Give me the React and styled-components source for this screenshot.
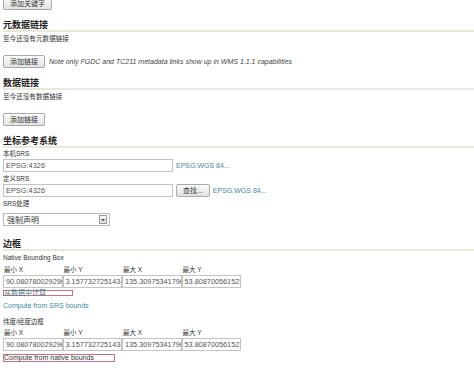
import React from "react";
import styled, { createGlobalStyle } from "styled-components";

const GlobalStyle = createGlobalStyle`
  html, body {
    margin: 0;
    padding: 0;
    background: #fff;
    overflow: hidden;
  }
  body {
    font-family: "Liberation Sans", "Noto Sans CJK SC", sans-serif;
    color: #333;
  }
`;

const Page = styled.div`
  display: flex;
  flex-direction: column;
  align-items: flex-start;
  padding-left: 3px;
  margin-top: -3px;
  width: 471px;
`;

const Button = styled.button`
  height: 13px;
  padding: 0 6px;
  margin: 0;
  border: 1px solid #a9a9a9;
  border-radius: 2px;
  background: linear-gradient(#fbfbfb, #e2e2e2);
  font-family: "Liberation Sans", "Noto Sans CJK SC", sans-serif;
  font-size: 7px;
  line-height: 11px;
  color: #333;
  white-space: nowrap;
  flex-shrink: 0;
`;

const Heading = styled.h3`
  align-self: stretch;
  margin: ${(p) => p.$top || 10}px 0 0;
  height: 10px;
  line-height: 10px;
  font-size: 9px;
  font-weight: bold;
  color: #222;
  border-bottom: 2px solid #e9e8da;
`;

const Small = styled.div`
  margin-top: ${(p) => p.$top || 0}px;
  font-size: ${(p) => p.$size || 6.6}px;
  line-height: ${(p) => p.$lh || 8}px;
  color: #333;
  white-space: nowrap;
`;

const Row = styled.div`
  display: flex;
  align-items: center;
  gap: ${(p) => p.$gap || 3}px;
  margin-top: ${(p) => p.$top || 0}px;
`;

const Hint = styled.span`
  font-size: 7px;
  font-style: italic;
  color: #444;
  margin-left: 1px;
  white-space: nowrap;
`;

const Input = styled.div`
  box-sizing: border-box;
  width: ${(p) => p.$w}px;
  height: 13px;
  border: 1px solid #c4c4c4;
  background: #fff;
  padding-left: 2px;
  font-size: 7.4px;
  line-height: 11px;
  color: #555;
  white-space: nowrap;
  overflow: hidden;
`;

const Link = styled.span`
  font-size: 7px;
  color: #3f8aa0;
  white-space: nowrap;
`;

const Select = styled.div`
  box-sizing: border-box;
  width: 107px;
  height: 13px;
  margin-top: 5px;
  border: 1px solid #b8b8b8;
  display: flex;
  align-items: center;
  justify-content: space-between;
  padding: 0 2px 0 3px;
  font-size: 8px;
  color: #333;
`;

const Arrow = styled.span`
  box-sizing: border-box;
  width: 8px;
  height: 9px;
  border: 1px solid #9a9a9a;
  background: linear-gradient(#fafafa, #dcdcdc);
  display: flex;
  align-items: center;
  justify-content: center;
  &::after {
    content: "";
    border-left: 2px solid transparent;
    border-right: 2px solid transparent;
    border-top: 2px solid #333;
  }
`;

const CoordGrid = styled.div`
  display: grid;
  grid-template-columns: repeat(4, 59.5px);
  margin-top: ${(p) => p.$top || 0}px;
`;

const CoordLabel = styled.div`
  font-size: 6.5px;
  line-height: 8px;
  padding-left: 1px;
  color: #333;
  white-space: nowrap;
`;

const CoordInput = styled.div`
  box-sizing: border-box;
  height: 13px;
  margin-top: 1px;
  border: 1px solid #c4c4c4;
  padding-left: 2px;
  font-size: 7.3px;
  line-height: 11px;
  color: #555;
  white-space: nowrap;
  overflow: hidden;
`;

const BoxLink = styled.div`
  box-sizing: border-box;
  width: ${(p) => p.$w}px;
  height: ${(p) => p.$h}px;
  margin-top: ${(p) => p.$top || 0}px;
  border: 1px solid #c5707c;
  font-size: 7px;
  line-height: ${(p) => p.$h - 2}px;
  color: ${(p) => p.$color || "#333"};
  white-space: nowrap;
  overflow: visible;
`;

const coords = [
  ["最小 X", "90.080780029296875"],
  ["最小 Y", "3.15773272514343"],
  ["最大 X", "135.309753417969"],
  ["最大 Y", "53.8087005615234"],
];

function Coords({ top }) {
  return (
    <CoordGrid $top={top}>
      {coords.map(([l]) => (
        <CoordLabel key={l}>{l}</CoordLabel>
      ))}
      {coords.map(([l, v]) => (
        <CoordInput key={l + "v"}>{v}</CoordInput>
      ))}
    </CoordGrid>
  );
}

export default function App() {
  return (
    <>
      <GlobalStyle />
      <Page>
        <Button>添加关键字</Button>

        <Heading>元数据链接</Heading>
        <Small $top={2} $lh={9}>至今还没有元数据链接</Small>
        <Row $top={12}>
          <Button>添加链接</Button>
          <Hint>Note only FGDC and TC211 metadata links show up in WMS 1.1.1 capabilities</Hint>
        </Row>

        <Heading>数据链接</Heading>
        <Small $top={2} $lh={9}>至今还没有数据链接</Small>
        <Row $top={12}>
          <Button>添加链接</Button>
        </Row>

        <Heading>坐标参考系统</Heading>
        <Small $top={2} $size={6.5}>本机SRS</Small>
        <Row $top={1}>
          <Input $w={170}>EPSG:4326</Input>
          <Link>EPSG:WGS 84...</Link>
        </Row>
        <Small $top={3} $size={6.5}>定义SRS</Small>
        <Row $top={1}>
          <Input $w={170}>EPSG:4326</Input>
          <Button>查找...</Button>
          <Link>EPSG:WGS 84...</Link>
        </Row>
        <Small $top={3} $size={6.5}>SRS处理</Small>
        <Select>
          强制声明
          <Arrow />
        </Select>

        <Heading $top={13}>边框</Heading>
        <Small $top={3} $size={6.5}>Native Bounding Box</Small>
        <Coords top={4} />
        <BoxLink $w={70} $h={6} $top={2} $color="#3a7f8f">从数据中计算</BoxLink>
        <Small $top={5} $lh={9}>
          <Link>Compute from SRS bounds</Link>
        </Small>
        <Small $top={7} $size={6.5} $lh={9}>纬度/经度边框</Small>
        <Coords top={3} />
        <BoxLink $w={112} $h={8} $top={3}>Compute from native bounds</BoxLink>
      </Page>
    </>
  );
}
